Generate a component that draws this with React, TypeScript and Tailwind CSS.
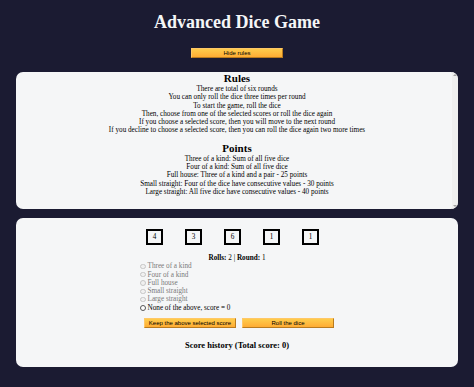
import React from "react";

const rules = [
  "There are total of six rounds",
  "You can only roll the dice three times per round",
  "To start the game, roll the dice",
  "Then, choose from one of the selected scores or roll the dice again",
  "If you choose a selected score, then you will move to the next round",
  "If you decline to choose a selected score, then you can roll the dice again two more times",
];

const points = [
  "Three of a kind: Sum of all five dice",
  "Four of a kind: Sum of all five dice",
  "Full house: Three of a kind and a pair - 25 points",
  "Small straight: Four of the dice have consecutive values - 30 points",
  "Large straight: All five dice have consecutive values - 40 points",
];

const options = [
  { label: "Three of a kind", disabled: true },
  { label: "Four of a kind", disabled: true },
  { label: "Full house", disabled: true },
  { label: "Small straight", disabled: true },
  { label: "Large straight", disabled: true },
  { label: "None of the above, score = 0", disabled: false },
];

const dice = [4, 3, 6, 1, 1];

function GoldButton({ children, className = "" }: { children: React.ReactNode; className?: string }) {
  return (
    <button
      className={
        "h-[10px] w-[92px] flex items-center justify-center bg-[#feac32] bg-gradient-to-b from-[#fecc4c] to-[#ffac33] border-[1.5px] border-t-[#ffc867] border-l-[#ffc867] border-b-[#b97b1f] border-r-[#b97b1f] text-[6px] leading-none text-black font-['Liberation_Sans',Arial,sans-serif] " +
        className
      }
    >
      {children}
    </button>
  );
}

export default function App() {
  return (
    <div className="min-h-screen bg-[#1b1b32] font-['Liberation_Serif','Times_New_Roman',serif] text-black pb-[24px]">
      <h1 className="pt-[12px] text-center text-[18px] leading-[21px] font-bold text-[#f5f6f7]">
        Advanced Dice Game
      </h1>

      <div className="mt-[15px] flex justify-center">
        <GoldButton>Hide rules</GoldButton>
      </div>

      {/* rules box with its (empty) scrollbar */}
      <div className="mx-auto mt-[14px] flex h-[137px] w-[442px] overflow-hidden rounded-[7px] bg-[#f5f6f7]">
        <div className="flex-1 pl-[6px] text-center">
          <h2 className="text-[11px] leading-[13px] font-bold">Rules</h2>
          <ul className="text-[7.2px] leading-[8.3px]">
            {rules.map((r) => (
              <li key={r}>{r}</li>
            ))}
          </ul>
          <h2 className="mt-[7px] text-[11px] leading-[13px] font-bold">Points</h2>
          <ul className="text-[7.2px] leading-[8.3px]">
            {points.map((p) => (
              <li key={p}>{p}</li>
            ))}
          </ul>
        </div>
        <div className="flex w-[6px] flex-col items-center justify-between bg-[#efefef] py-[2px]">
          <span className="h-0 w-0 border-x-[2px] border-b-[2px] border-x-transparent border-b-[#a3a3a3]" />
          <span className="h-0 w-0 border-x-[2px] border-t-[2px] border-x-transparent border-t-[#a3a3a3]" />
        </div>
      </div>

      {/* game box */}
      <div className="mx-auto mt-[9px] w-[442px] rounded-[7px] bg-[#f5f6f7] pt-[11px] pb-[17px]">
        <div className="mx-auto flex w-[194px] gap-[22px] pl-[6px]">
          {dice.map((d, i) => (
            <div
              key={i}
              className="flex h-[16px] w-[17px] items-center justify-center border-[2px] border-black text-[7.2px]"
            >
              {d}
            </div>
          ))}
        </div>

        <p className="mt-[9px] text-center text-[7.2px] leading-[8.3px]">
          <span className="font-bold">Rolls:</span> 2 | <span className="font-bold">Round:</span> 1
        </p>

        <div className="mx-auto w-[194px]">
          {options.map((o) => (
            <div key={o.label} className="flex h-[8.3px] items-center gap-[2px] text-[7.2px] leading-[8.3px]">
              <span
                className={
                  o.disabled
                    ? "h-[5.5px] w-[5.5px] rounded-full border-[0.8px] border-[#c6c6c6] bg-[#f0f0f0]"
                    : "h-[5.5px] w-[5.5px] rounded-full border-[0.8px] border-[#555] bg-white"
                }
              />
              <span className={o.disabled ? "text-[#7a7a7a]" : "text-black"}>{o.label}</span>
            </div>
          ))}
          <div className="mt-[6px] flex gap-[6px] pl-[4px]">
            <GoldButton>Keep the above selected score</GoldButton>
            <GoldButton>Roll the dice</GoldButton>
          </div>
        </div>

        <h3 className="mt-[12px] text-center text-[8.5px] leading-[10px] font-bold">
          Score history (Total score: 0)
        </h3>
      </div>
    </div>
  );
}
